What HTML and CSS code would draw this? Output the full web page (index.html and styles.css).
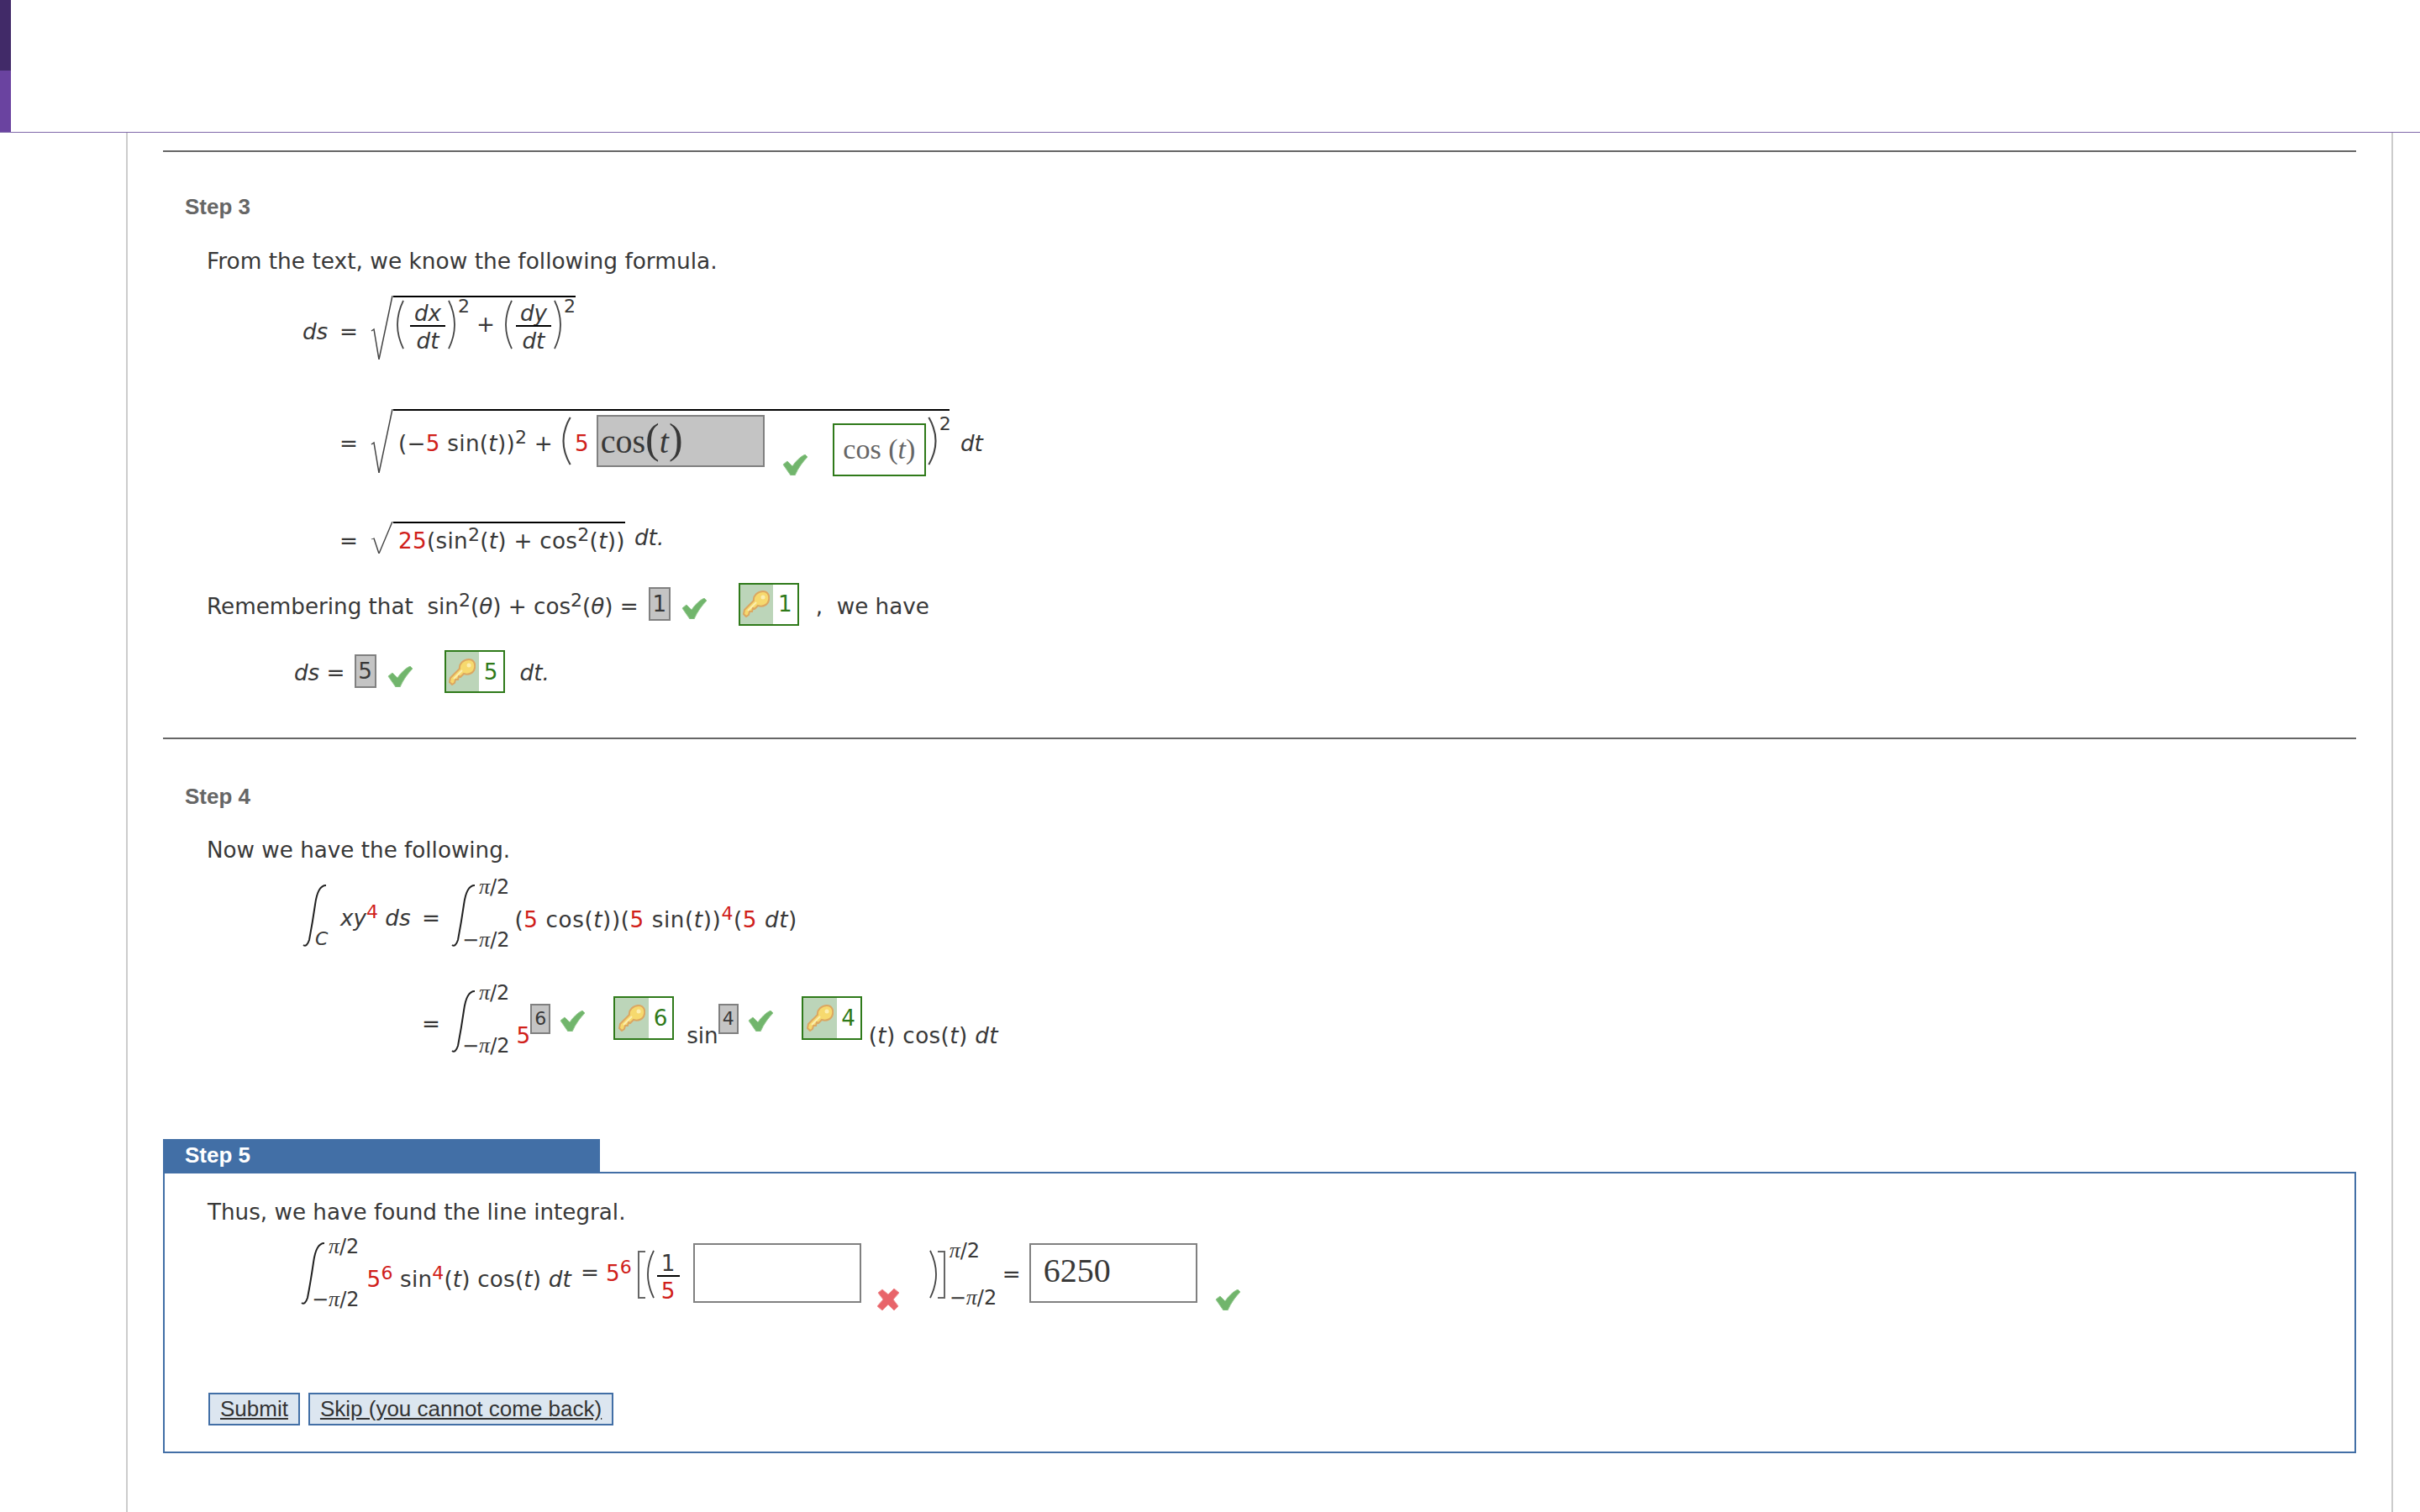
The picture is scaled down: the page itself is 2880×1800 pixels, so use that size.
FILE: index.html
```html
<!DOCTYPE html>
<html lang="en">
<head>
  <meta charset="UTF-8" />
  <title>Line Integral - Step 5</title>
  <link rel="stylesheet" href="styles.css">
</head>
<body>
  <svg class="defs" width="0" height="0" aria-hidden="true">
    <symbol id="check" viewBox="0 0 30 25">
      <path d="M1 12 L6 8 L12 14 C16 8 21 3 27 0 L30 3 C24 9 19 16 15 25 L10 25 Z" fill="#71b56c" stroke="#93c98e" stroke-width="1"/>
    </symbol>
    <symbol id="cross" viewBox="0 0 26 26">
      <path d="M1 5 L6 1 L13 7 L20 0 L26 5 L19 13 L25 21 L20 26 L13 19 L6 26 L0 21 L7 13 Z" fill="#e8646a" stroke="#f09094" stroke-width="1"/>
    </symbol>
    <symbol id="key" viewBox="0 0 32 32">
      <path d="M2 23 L13 12 C12 6 18 1 24 1 C29 1 32 5 31 11 C30 17 24 20 18 18 L14 22 L12 21 L11 25 L8 25 L7 29 L4 31 L1 28 Z" fill="#f6d96e" stroke="#dca760" stroke-width="2"/>
      <path d="M6 24 L16 14" fill="none" stroke="#fbeeb0" stroke-width="2"/>
      <circle cx="24" cy="8" r="2.5" fill="#fbeeb0"/>
    </symbol>
    <symbol id="lparen" viewBox="0 0 12 60" preserveAspectRatio="none">
      <path d="M10 1 Q-4 30 10 59" fill="none" stroke="#444" stroke-width="1.8"/>
    </symbol>
    <symbol id="rparen" viewBox="0 0 12 60" preserveAspectRatio="none">
      <path d="M2 1 Q16 30 2 59" fill="none" stroke="#444" stroke-width="1.8"/>
    </symbol>
    <symbol id="radical" viewBox="0 0 27 76" preserveAspectRatio="none">
      <path d="M1 42 L4 40 L10 76 L26 0" fill="none" stroke="#444" stroke-width="1.5"/>
    </symbol>
    <symbol id="integral" viewBox="0 0 29 76">
      <path d="M1 73 Q5 76 8 67 Q12 46 15 25 Q18 2 28 2" fill="none" stroke="#222" stroke-width="2"/>
    </symbol>
  </svg>

  <header class="top">
    <div class="brand-bar"><span class="brand-dark"></span><span class="brand-light"></span></div>
  </header>

  <div class="main">
    <hr class="rule">

    <h3 class="step-label step-3">Step 3</h3>
    <p class="para para-3">From the text, we know the following formula.</p>

    <div class="row row-1">
      <span class="lhs"><i>ds</i></span><span class="eq">=</span>
      <span class="sqrt">
        <svg class="rad rad-1"><use href="#radical"/></svg>
        <span class="radicand rc-1">
          <svg class="paren p-1 open first-paren"><use href="#lparen"/></svg>
          <span class="frac"><i>dx</i><i class="den">dt</i></span>
          <svg class="paren p-1 shut"><use href="#rparen"/></svg>
          <span class="top-sup">2</span>
          <span class="plus">+</span>
          <svg class="paren p-1 open"><use href="#lparen"/></svg>
          <span class="frac"><i>dy</i><i class="den">dt</i></span>
          <svg class="paren p-1 shut"><use href="#rparen"/></svg>
          <span class="top-sup">2</span>
        </span>
      </span>
    </div>

    <div class="row row-2">
      <span class="lhs"></span><span class="eq">=</span>
      <span class="sqrt">
        <svg class="rad rad-2"><use href="#radical"/></svg>
        <span class="radicand rc-2">
          <span class="expr first spaced">(−<b class="red">5</b> sin(<i>t</i>))<sup>2</sup> +</span>
          <svg class="paren p-2"><use href="#lparen"/></svg>
          <b class="red five">5</b>
          <span class="ans ans-wide"><span class="serif">cos<span class="tall">(</span><i>t</i><span class="tall">)</span></span></span>
          <svg class="check check-low"><use href="#check"/></svg>
          <span class="key-box key-wide"><span class="serif small">cos (<i>t</i>)</span></span>
          <svg class="paren p-2 close"><use href="#rparen"/></svg>
          <span class="top-sup sup-2">2</span>
        </span>
      </span>
      <i class="after-root">dt</i>
    </div>

    <div class="row row-3">
      <span class="lhs"></span><span class="eq">=</span>
      <span class="sqrt">
        <svg class="rad rad-3"><use href="#radical"/></svg>
        <span class="radicand rc-3">
          <span class="expr first spaced"><b class="red">25</b>(sin<sup>2</sup>(<i>t</i>) + cos<sup>2</sup>(<i>t</i>))</span>
        </span>
      </span>
      <i class="dt-dot">dt.</i>
    </div>

    <div class="row row-4">
      <span class="expr">Remembering that&nbsp; sin<sup>2</sup>(<i>θ</i>) + cos<sup>2</sup>(<i>θ</i>) =</span>
      <span class="ans ans-num gap-12">1</span>
      <svg class="check check-row"><use href="#check"/></svg>
      <span class="key-box key-row"><span class="key-bg"><svg class="key"><use href="#key"/></svg></span><span class="key-val">1</span></span>
      <span class="expr comma">,&nbsp; we have</span>
    </div>

    <div class="row row-5">
      <span class="expr"><i>ds</i> =</span>
      <span class="ans ans-num gap-11">5</span>
      <svg class="check check-row"><use href="#check"/></svg>
      <span class="key-box key-row"><span class="key-bg"><svg class="key"><use href="#key"/></svg></span><span class="key-val">5</span></span>
      <i class="expr dt-end">dt.</i>
    </div>

    <hr class="rule rule-2">

    <h3 class="step-label step-4">Step 4</h3>
    <p class="para para-4">Now we have the following.</p>

    <div class="row row-6">
      <span class="lhs-int">
        <svg class="int-sign"><use href="#integral"/></svg>
        <i class="sub-c">C</i>
        <span class="expr xy"><i>xy</i><sup class="red">4</sup> <i>ds</i></span>
      </span>
      <span class="eq eq-int">=</span>
      <span class="int">
        <svg class="int-sign"><use href="#integral"/></svg>
        <span class="limits"><span class="up"><i class="pi">π</i>/2</span><span class="low">−<i class="pi">π</i>/2</span></span>
      </span>
      <span class="expr int-body">(<b class="red">5</b> cos(<i>t</i>))(<b class="red">5</b> sin(<i>t</i>))<sup class="red">4</sup>(<b class="red">5</b> <i>dt</i>)</span>
    </div>

    <div class="row row-7">
      <span class="lhs-int"></span>
      <span class="eq eq-int">=</span>
      <span class="int">
        <svg class="int-sign"><use href="#integral"/></svg>
        <span class="limits"><span class="up"><i class="pi">π</i>/2</span><span class="low">−<i class="pi">π</i>/2</span></span>
      </span>
      <b class="red base-5">5</b>
      <span class="ans ans-sup">6</span>
      <svg class="check check-sup"><use href="#check"/></svg>
      <span class="key-box key-sup"><span class="key-bg bg-sup"><svg class="key"><use href="#key"/></svg></span><span class="key-val">6</span></span>
      <span class="expr sin-base">sin</span>
      <span class="ans ans-sup">4</span>
      <svg class="check check-sup"><use href="#check"/></svg>
      <span class="key-box key-sup"><span class="key-bg bg-sup"><svg class="key"><use href="#key"/></svg></span><span class="key-val">4</span></span>
      <span class="expr tail">(<i>t</i>) cos(<i>t</i>) <i>dt</i></span>
    </div>

    <div class="step-tab">Step 5</div>
    <div class="step-box">
      <p class="para para-5">Thus, we have found the line integral.</p>
      <div class="row row-8">
        <span class="int">
          <svg class="int-sign"><use href="#integral"/></svg>
          <span class="limits"><span class="up"><i class="pi">π</i>/2</span><span class="low">−<i class="pi">π</i>/2</span></span>
        </span>
        <span class="expr body-5"><b class="red">5</b><sup class="red">6</sup> sin<sup class="red">4</sup>(<i>t</i>) cos(<i>t</i>) <i>dt</i></span>
        <span class="eq eq-5">=</span>
        <span class="expr pow-5"><b class="red">5<sup>6</sup></b></span>
        <span class="bracket bracket-l"></span>
        <svg class="paren p-3"><use href="#lparen"/></svg>
        <span class="frac frac-5"><span>1</span><b class="red den">5</b></span>
        <span class="input"></span>
        <svg class="cross"><use href="#cross"/></svg>
        <svg class="paren p-3 close-5"><use href="#rparen"/></svg>
        <span class="bracket bracket-r"></span>
        <span class="limits limits-5"><span class="up"><i class="pi">π</i>/2</span><span class="low">−<i class="pi">π</i>/2</span></span>
        <span class="eq eq-6">=</span>
        <span class="input input-val">6250</span>
        <svg class="check check-val"><use href="#check"/></svg>
      </div>
      <div class="buttons">
        <button class="btn">Submit</button>
        <button class="btn">Skip (you cannot come back)</button>
      </div>
    </div>
  </div>
</body>
</html>
```
FILE: styles.css
```css
* {
  box-sizing: border-box;
}

body {
  margin: 0;
  background: #fff;
  color: #383838;
  font-family: "DejaVu Sans", sans-serif;
  font-size: 26.2px;
}

.defs {
  position: absolute;
}

.top {
  height: 158px;
  border-bottom: 1px solid #8068aa;
}

.brand-bar {
  width: 13px;
  height: 157px;
  display: flex;
  flex-direction: column;
}

.brand-dark {
  height: 84px;
  background: #412a68;
}

.brand-light {
  flex: 1;
  background: #6a43a0;
}

.main {
  width: 2698px;
  height: 1642px;
  margin-left: 150px;
  padding: 21px 42px 0;
  border-left: 2px solid #ccc;
  border-right: 2px solid #ccc;
}

.rule {
  margin: 0;
  height: 2px;
  border: 0;
  background: #666;
}

.rule-2 {
  margin-top: 51px;
}

.step-label {
  margin: 0 0 0 26px;
  height: 40px;
  line-height: 40px;
  font-family: "Liberation Sans", sans-serif;
  font-size: 26px;
  color: #666;
}

.step-3 { margin-top: 45px; }
.step-4 { margin-top: 48px; }

.para {
  margin: 0 0 0 52px;
  height: 40px;
  line-height: 40px;
}

.para-3 { margin-top: 25px; font-size: 26.4px; }
.para-4 { margin-top: 24px; }
.para-5 { margin: 26px 0 0 51px; }

.row {
  display: flex;
  align-items: center;
  white-space: nowrap;
}

.row-1 { height: 80px; margin: 19px 0 0 166px; }
.row-2 { height: 86px; margin: 55px 0 0 166px; }
.row-3 { height: 46px; margin: 50px 0 0 166px; }
.row-4 { height: 52px; margin: 29px 0 0 52px; }
.row-5 { height: 52px; margin: 27px 0 0 156px; }
.row-6 { height: 80px; margin: 21px 0 0 166px; }
.row-7 { height: 80px; margin: 46px 0 0 166px; }
.row-8 { height: 80px; margin: 16px 0 0 162px; }

sup {
  font-size: 22px;
  line-height: 0;
  vertical-align: 9px;
}

.red {
  color: #d0201a;
  font-weight: normal;
}

.lhs {
  width: 44px;
}

.row-1 .lhs, .row-1 .eq {
  margin-top: 10px;
}

.eq {
  width: 37px;
}

.sqrt {
  display: flex;
  align-self: flex-start;
  margin-top: 2px;
}

.row-3 .sqrt {
  margin-top: 0;
}

.rad {
  width: 27px;
  display: block;
  flex: none;
}

.rad-1 { height: 76px; }
.rad-2 { height: 76px; }
.rad-3 { height: 38px; }

.radicand {
  display: flex;
  align-items: center;
  border-top: 2px solid #000;
}

.rc-1 { height: 70px; width: 217px; }
.rc-2 { height: 80px; width: 662px; }
.rc-3 { height: 44px; width: 276px; }

.paren {
  display: block;
  flex: none;
  width: 12px;
}

.p-1 { height: 59px; margin-top: -4px; }
.p-2 { width: 14px; height: 58px; margin: -6px 0 0 9px; }
.p-3 { height: 58px; margin-top: -4px; }

.open { margin-left: 10px; margin-right: 3px; }
.first-paren { margin-left: 2px; margin-right: 6px; }
.shut { margin-left: 2px; }

.frac {
  display: flex;
  flex-direction: column;
  align-items: center;
  flex: none;
  width: 42px;
  margin-top: 6px;
}

.frac > :first-child {
  line-height: 28px;
}

.frac .den {
  width: 100%;
  text-align: center;
  line-height: 34px;
  border-top: 2px solid #000;
}

.top-sup {
  font-size: 22px;
  margin-top: -48px;
  margin-left: 1px;
}

.plus {
  margin: -4px 0 0 8px;
}

.first {
  margin-left: 6px;
}

.spaced {
  letter-spacing: 0.3px;
}

.five {
  margin-left: 3px;
}

.ans {
  background: #c4c4c4;
  border: 2px solid #808080;
  flex: none;
  color: #383838;
}

.ans-wide {
  width: 200px;
  height: 62px;
  margin: -6px 0 0 9px;
  padding-left: 3px;
  display: flex;
  align-items: center;
}

.serif {
  font-family: "Liberation Serif", serif;
  font-size: 40px;
}

.serif.small {
  font-size: 34px;
  color: #666;
}

.tall {
  font-size: 50px;
  font-weight: lighter;
  line-height: 0;
}

.check {
  flex: none;
  width: 30px;
  height: 25px;
  display: block;
}

.check-low {
  margin: 50px 0 0 21px;
}

.key-box {
  display: flex;
  align-items: center;
  flex: none;
  border: 2px solid #2f7a1a;
  color: #2f7a1a;
}

.key-wide {
  width: 111px;
  height: 63px;
  margin: 14px 0 0 30px;
  justify-content: center;
}

.p-2.close {
  margin-left: 1px;
}

.sup-2 {
  margin-top: -48px;
  margin-left: 1px;
}

.after-root {
  margin-left: 13px;
  align-self: center;
}

.dt-dot {
  margin: -8px 0 0 11px;
}

.gap-12 { margin-left: 12px; }
.gap-11 { margin-left: 11px; }

.ans-num {
  width: 26px;
  height: 40px;
  line-height: 36px;
  text-align: center;
  margin-top: -6px;
}

.check-row {
  margin: 4px 0 0 13px;
}

.key-row {
  width: 72px;
  height: 51px;
  margin: -6px 0 0 38px;
}

.row-5 .ans-num { margin-top: -4px; }
.row-5 .check-row { margin-top: 8px; }
.row-5 .key-row { margin-top: -3px; }

.key-bg {
  display: flex;
  align-items: center;
  justify-content: center;
  background: #bcd5b9;
  width: 39px;
  height: 100%;
}

.bg-sup {
  width: 40px;
}

.key {
  width: 32px;
  height: 32px;
  display: block;
}

.key-val {
  flex: 1;
  text-align: center;
}

.comma {
  margin-left: 20px;
}

.dt-end {
  margin-left: 18px;
}

.lhs-int {
  width: 142px;
  display: flex;
  align-items: center;
  position: relative;
}

.int-sign {
  width: 29px;
  height: 76px;
  flex: none;
  display: block;
  margin-top: -6px;
}

.sub-c {
  position: absolute;
  left: 15px;
  bottom: -2px;
  font-size: 22px;
}

.xy {
  margin-left: 16px;
}

.eq-int {
  width: 35px;
}

.int {
  display: flex;
  align-items: center;
  flex: none;
}

.limits {
  display: flex;
  flex-direction: column;
  justify-content: space-between;
  flex: none;
  font-size: 24px;
  line-height: 26px;
  height: 89px;
  margin-top: -12px;
}

.row-8 .int .limits {
  margin-top: -8px;
}

.up {
  margin-left: 4px;
}

.low {
  margin-left: -16px;
}

.pi {
  font-family: "Liberation Serif", serif;
  font-size: 26px;
}

.int-body {
  margin: 4px 0 0 6px;
  letter-spacing: 0.6px;
}

.base-5 {
  margin: 28px 0 0 8px;
}

.ans-sup {
  width: 24px;
  height: 36px;
  line-height: 32px;
  font-size: 22px;
  text-align: center;
  margin: -13px 0 0 0;
}

.check-sup {
  margin: -8px 0 0 11px;
}

.key-sup {
  width: 72px;
  height: 52px;
  margin: -14px 0 0 34px;
}

.sin-base {
  margin: 28px 0 0 15px;
}

.tail {
  margin: 28px 0 0 8px;
  letter-spacing: 0.4px;
}

.step-tab {
  margin-top: 97px;
  width: 520px;
  height: 40px;
  line-height: 38px;
  padding-left: 26px;
  background: #426fa6;
  color: #fff;
  font-family: "Liberation Sans", sans-serif;
  font-weight: bold;
  font-size: 26px;
}

.step-box {
  height: 335px;
  border: 2px solid #426fa6;
  margin-top: -1px;
}

.body-5 {
  margin: 8px 0 0 9px;
  letter-spacing: 0.2px;
}

.eq-5 {
  width: auto;
  margin: -8px 0 0 11px;
}

.pow-5 {
  margin: -6px 0 0 8px;
}

.bracket {
  flex: none;
  width: 9px;
  height: 57px;
  border: 2px solid #666;
  margin-top: -4px;
}

.bracket-l {
  border-right: 0;
  margin-left: 7px;
}

.bracket-r {
  border-left: 0;
  margin-left: -1px;
}

.frac-5 {
  width: 27px;
  margin: 6px 0 0 2px;
}

.input {
  flex: none;
  width: 200px;
  height: 71px;
  border: 2px solid #808080;
  background: #fff;
  margin: -8px 0 0 16px;
}

.input-val {
  margin-left: 10px;
  padding-left: 15px;
  font-family: "Liberation Serif", serif;
  font-size: 40px;
  line-height: 62px;
}

.cross {
  flex: none;
  width: 26px;
  height: 26px;
  display: block;
  margin: 56px 0 0 19px;
}

.close-5 {
  margin-left: 35px;
}

.limits-5 {
  margin: -4px 0 0 5px;
  height: 82px;
  width: 60px;
}

.limits-5 .up, .limits-5 .low {
  margin-left: 0;
}

.eq-6 {
  width: auto;
  margin: -4px 0 0 3px;
}

.check-val {
  margin: 56px 0 0 21px;
}

.buttons {
  display: flex;
  gap: 10px;
  margin: 99px 0 0 52px;
}

.btn {
  height: 39px;
  padding: 0 12px;
  background: #dce6f0;
  border: 2px solid #426fa6;
  color: #333;
  font-family: "Liberation Sans", sans-serif;
  font-size: 26px;
  text-decoration: underline;
  line-height: 33px;
}
```
